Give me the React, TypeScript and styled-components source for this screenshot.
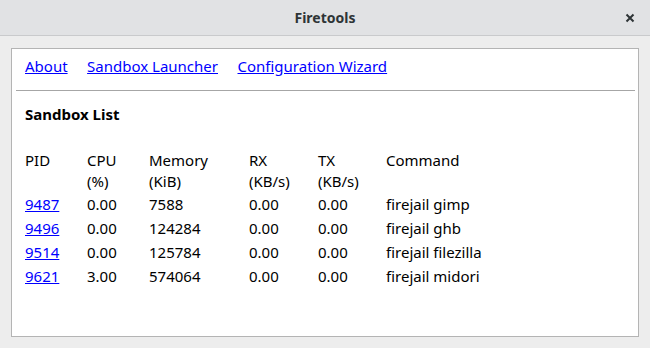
import * as React from 'react';
import styled, { createGlobalStyle } from 'styled-components';

const GlobalStyle = createGlobalStyle`
  html, body {
    margin: 0;
    padding: 0;
    background: #ededed;
  }
  body {
    font-family: 'Noto Sans', 'Open Sans', sans-serif;
    color: #000;
  }
`;

const sandboxes = [
  { pid: '9487', cpu: '0.00', mem: '7588', rx: '0.00', tx: '0.00', cmd: 'firejail gimp' },
  { pid: '9496', cpu: '0.00', mem: '124284', rx: '0.00', tx: '0.00', cmd: 'firejail ghb' },
  { pid: '9514', cpu: '0.00', mem: '125784', rx: '0.00', tx: '0.00', cmd: 'firejail filezilla' },
  { pid: '9621', cpu: '3.00', mem: '574064', rx: '0.00', tx: '0.00', cmd: 'firejail midori' },
];

const App = () => {
  return (
    <>
      <GlobalStyle />
      <Window>
        <TitleBar>
          <Title>Firetools</Title>
          <CloseButton>
            <svg width="10" height="10" viewBox="0 0 10 10">
              <path d="M1.5 1.5 L8.5 8.5 M8.5 1.5 L1.5 8.5" stroke="#2e3436" strokeWidth="2" />
            </svg>
          </CloseButton>
        </TitleBar>
        <Body>
          <Panel>
            <Nav>
              <Link href="#">About</Link>
              <Link href="#">Sandbox Launcher</Link>
              <Link href="#">Configuration Wizard</Link>
            </Nav>
            <Rule />
            <Heading>Sandbox List</Heading>
            <Table>
              <thead>
                <tr>
                  <Th $w={62}>PID</Th>
                  <Th $w={62}>CPU<br />(%)</Th>
                  <Th $w={100}>Memory<br />(KiB)</Th>
                  <Th $w={69}>RX<br />(KB/s)</Th>
                  <Th $w={68}>TX<br />(KB/s)</Th>
                  <Th>Command</Th>
                </tr>
              </thead>
              <tbody>
                {sandboxes.map((s) => (
                  <tr key={s.pid}>
                    <Td><Link href="#">{s.pid}</Link></Td>
                    <Td>{s.cpu}</Td>
                    <Td>{s.mem}</Td>
                    <Td>{s.rx}</Td>
                    <Td>{s.tx}</Td>
                    <Td>{s.cmd}</Td>
                  </tr>
                ))}
              </tbody>
            </Table>
          </Panel>
        </Body>
      </Window>
    </>
  );
};

export default App;

const Window = styled.div`
  width: 650px;
  height: 348px;
  display: flex;
  flex-direction: column;
  background: #ededed;
`;

const TitleBar = styled.div`
  position: relative;
  height: 35px;
  flex-shrink: 0;
  background: #e1e2e4;
  border-bottom: 1px solid #c9cacc;
  display: flex;
  align-items: center;
  justify-content: center;
`;

const Title = styled.div`
  font-family: 'Noto Sans', sans-serif;
  font-weight: bold;
  font-size: 14px;
  color: #2e3436;
`;

const CloseButton = styled.div`
  position: absolute;
  right: 15px;
  top: 13px;
  width: 10px;
  height: 10px;
  display: flex;
`;

const Body = styled.div`
  flex: 1;
  padding: 12px 11px 11px 11px;
  display: flex;
`;

const Panel = styled.div`
  flex: 1;
  background: #fff;
  border: 1px solid #b4b4b4;
  padding: 0 3px 0 4px;
  display: flex;
  flex-direction: column;
`;

const Nav = styled.div`
  display: flex;
  gap: 19.5px;
  padding: 7px 0 0 9px;
  height: 33px;
  box-sizing: border-box;
  font-size: 15px;
  line-height: 20px;
`;

const Link = styled.a`
  color: #0000ff;
  text-decoration: underline;
`;

const Rule = styled.div`
  height: 1px;
  background: #a6a6a6;
  margin-top: 8px;
`;

const Heading = styled.div`
  font-weight: bold;
  font-size: 15px;
  line-height: 20px;
  padding: 13px 0 0 9px;
`;

const Table = styled.table`
  border-collapse: collapse;
  margin: 25px 0 0 9px;
  font-size: 15px;
`;

const Th = styled.th<{ $w?: number }>`
  width: ${(p) => (p.$w ? `${p.$w}px` : 'auto')};
  text-align: left;
  vertical-align: top;
  font-weight: normal;
  line-height: 21px;
  padding: 1px 0 0 0;
`;

const Td = styled.td`
  line-height: 22px;
  padding: 1px 0;
  vertical-align: top;
`;
